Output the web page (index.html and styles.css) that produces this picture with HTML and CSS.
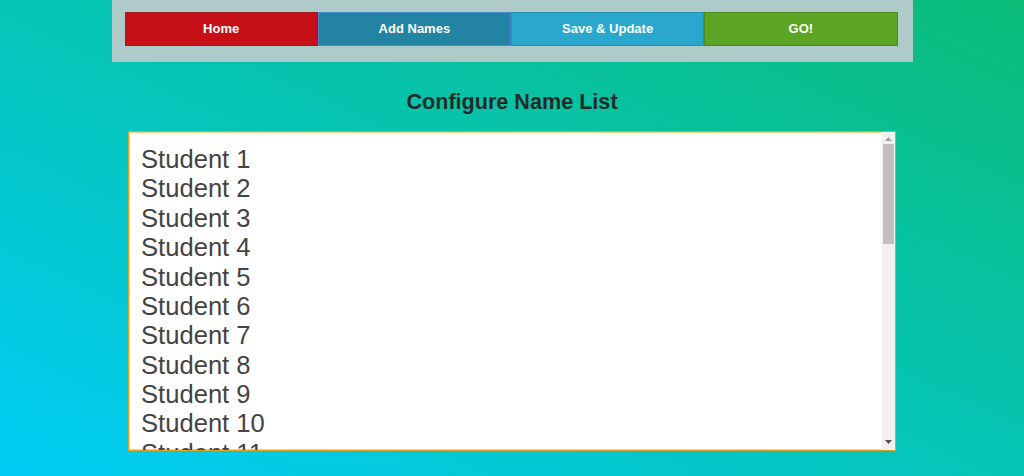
FILE: index.html
```html
<!DOCTYPE html>
<html lang="en">
<head>
<meta charset="utf-8">
<title>Configure Name List</title>
<link rel="stylesheet" href="styles.css">
</head>
<body>
<nav class="panel">
  <div class="menu">
    <a class="btn btn-home" href="#">Home</a>
    <a class="btn btn-add" href="#">Add Names</a>
    <a class="btn btn-save" href="#">Save &amp; Update</a>
    <a class="btn btn-go" href="#">GO!</a>
  </div>
</nav>
<h1 class="title">Configure Name List</h1>
<div class="editor">
<textarea class="names">Student 1
Student 2
Student 3
Student 4
Student 5
Student 6
Student 7
Student 8
Student 9
Student 10
Student 11
Student 12
Student 13
Student 14
Student 15
Student 16
Student 17
Student 18
Student 19
Student 20
Student 21
Student 22
Student 23
Student 24
Student 25
Student 26
Student 27
Student 28
Student 29
Student 30</textarea>
  <div class="scrollbar" aria-hidden="true">
    <div class="sb-btn sb-up"><svg width="7" height="4" viewBox="0 0 7 4"><path d="M0 4 L3.5 0 L7 4 Z" fill="#a3a3a3"/></svg></div>
    <div class="sb-thumb"></div>
    <div class="sb-space"></div>
    <div class="sb-btn sb-down"><svg width="7" height="4" viewBox="0 0 7 4"><path d="M0 0 L3.5 4 L7 0 Z" fill="#505050"/></svg></div>
  </div>
</div>
</body>
</html>
```
FILE: styles.css
```css
html, body {
  height: 100%;
}
body {
  margin: 0;
  font-family: "Liberation Sans", Arial, sans-serif;
  background: linear-gradient(to top right, #00cdf6, #0bbc77);
}
.panel {
  width: 801px;
  margin: 0 auto;
  box-sizing: border-box;
  padding: 12px 15px 15px 13px;
  background: #aecbc9;
  border-bottom: 1px solid #8fd3d0;
}
.menu {
  display: grid;
  grid-template-columns: repeat(4, 1fr);
  height: 34px;
}
.btn {
  display: flex;
  align-items: center;
  justify-content: center;
  color: #fff;
  font-weight: bold;
  font-size: 13px;
  text-decoration: none;
  border: 1px solid transparent;
  padding-bottom: 1px;
}
.btn-home {
  background: #c70f17;
  border-color: #a2191c;
}
.btn-add {
  background: #2283a3;
  border-color: #4b8ad2;
}
.btn-save {
  background: #2aa7cc;
  border-color: #2592b4;
}
.btn-go {
  background: #5ba424;
  border-color: #4a8a22;
}
.title {
  margin: 28px 0 18px;
  text-align: center;
  font-size: 21.6px;
  line-height: 23px;
  font-weight: bold;
  color: #232a2a;
}
.editor {
  position: relative;
  width: 768px;
  height: 320px;
  margin: 0 auto;
}
.names {
  display: block;
  width: 100%;
  height: 100%;
  margin: 0;
  box-sizing: border-box;
  padding: 13px 13px 12px 12px;
  border: 1px solid #e3a11d;
  box-shadow: inset 0 0 0 1px #f6d27c;
  background: #fff;
  font-family: "Liberation Sans", Arial, sans-serif;
  font-size: 25.6px;
  line-height: 29.38px;
  color: #444;
  resize: none;
  outline: none;
  overflow: hidden;
}
.scrollbar {
  position: absolute;
  top: 1px;
  right: 1px;
  bottom: 1px;
  width: 13px;
  background: #f1f1f1;
  display: flex;
  flex-direction: column;
}
.sb-btn {
  display: flex;
  justify-content: center;
  align-items: center;
}
.sb-up {
  height: 11px;
  padding-top: 1px;
}
.sb-down {
  height: 15px;
  padding-bottom: 1px;
}
.sb-thumb {
  height: 100px;
  margin: 0 1px;
  background: #c1c1c1;
}
.sb-space {
  flex: 1;
}
```
